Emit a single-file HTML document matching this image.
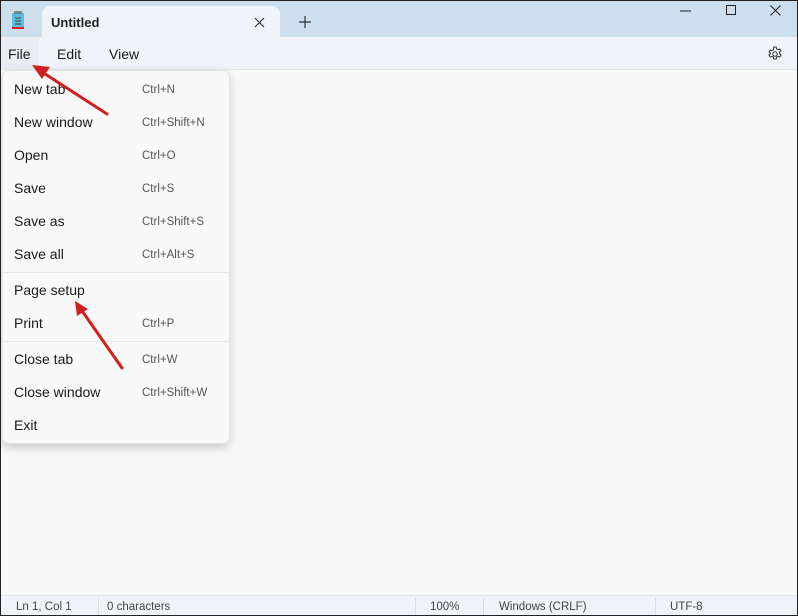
<!DOCTYPE html>
<html><head><meta charset="utf-8"><style>
*{margin:0;padding:0;box-sizing:border-box}
body{width:798px;height:616px;overflow:hidden;font-family:"Segoe UI","Liberation Sans",sans-serif;background:#222;position:relative}
.win{position:absolute;left:1px;top:1px;width:796px;height:614px;background:#f9f9f9;overflow:hidden}
.title{position:absolute;left:0;top:0;width:796px;height:37px;background:#cddeec}
.tab{position:absolute;left:41px;top:5px;width:238px;height:34px;background:#f0f4f9;border-radius:8px 8px 0 0}
.tab span{position:absolute;left:9px;top:9px;font-size:13px;font-weight:bold;color:#222}
.menubar{position:absolute;left:0;top:36px;width:796px;height:33px;background:#f0f4f9;border-bottom:1px solid #e3e6ea}
.mb{position:absolute;top:9px;font-size:14px;color:#1a1a1a}
.menu{position:absolute;left:1px;top:69px;width:228px;height:374px;background:#f9f9f9;border-radius:7px;box-shadow:0 4px 10px rgba(0,0,0,.18);border:1px solid #e4e4e4}
.it{position:absolute;left:11px;font-size:14px;color:#1a1a1a}
.sc{position:absolute;left:139px;font-size:11.5px;color:#555}
.sep{position:absolute;left:0;width:226px;height:1px;background:#e5e5e5}
.status{position:absolute;left:0;top:594px;width:796px;height:20px;background:#f0f4f9;border-top:1px solid #e3e6ea;font-size:11.5px;color:#444}
.status span{position:absolute;top:5px}
.vl{position:absolute;top:2px;width:1px;height:18px;background:#ddd}
</style></head><body><div class="win">
<div class="title">
 <svg style="position:absolute;left:10px;top:10px" width="14" height="19"><rect x="1" y="2" width="12" height="14" fill="#5bbde0"/><rect x="1" y="16" width="12" height="2" fill="#d8232a"/><rect x="3" y="0" width="8" height="3" fill="#555" opacity=".6"/><path d="M4 7h6M4 10h6M4 13h6" stroke="#555" stroke-width="1.2"/></svg>
 <div class="tab"><span>Untitled</span>
 <svg style="position:absolute;left:212px;top:11px" width="11" height="11"><path d="M1 1L10 10M10 1L1 10" stroke="#333" stroke-width="1.2"/></svg></div>
 <svg style="position:absolute;left:298px;top:15px" width="12" height="12"><path d="M6 0V12M0 6H12" stroke="#333" stroke-width="1.2"/></svg>
 <svg style="position:absolute;left:679px;top:9px" width="11" height="2"><path d="M0 1H11" stroke="#222" stroke-width="1"/></svg>
 <svg style="position:absolute;left:724px;top:3px" width="12" height="12"><rect x="1.5" y="1.5" width="9" height="9" fill="none" stroke="#222"/></svg>
 <svg style="position:absolute;left:769px;top:4px" width="11" height="11"><path d="M0.5 0.5L10.5 10.5M10.5 0.5L0.5 10.5" stroke="#222"/></svg>
</div>
<div class="menubar">
 <div style="position:absolute;left:0;top:0;width:38px;height:33px;background:#e9edf2"></div>
 <span class="mb" style="left:7px">File</span><span class="mb" style="left:56px">Edit</span><span class="mb" style="left:108px">View</span>
 <svg style="position:absolute;left:766px;top:9px" width="16" height="16" viewBox="0 0 16 16"><path d="M6.8 1h2.4l.4 1.9 1.4.8 1.8-.7 1.2 2-1.5 1.3v1.4l1.5 1.3-1.2 2-1.8-.7-1.4.8-.4 1.9H6.8l-.4-1.9-1.4-.8-1.8.7-1.2-2 1.5-1.3V7.3L2 6l1.2-2 1.8.7 1.4-.8z" fill="none" stroke="#333" stroke-width="1"/><circle cx="8" cy="8" r="2.2" fill="none" stroke="#333"/></svg>
</div>
<div class="menu">
 <span class="it" style="top:10px">New tab</span><span class="sc" style="top:13px">Ctrl+N</span>
 <span class="it" style="top:43px">New window</span><span class="sc" style="top:46px">Ctrl+Shift+N</span>
 <span class="it" style="top:76px">Open</span><span class="sc" style="top:79px">Ctrl+O</span>
 <span class="it" style="top:109px">Save</span><span class="sc" style="top:112px">Ctrl+S</span>
 <span class="it" style="top:142px">Save as</span><span class="sc" style="top:145px">Ctrl+Shift+S</span>
 <span class="it" style="top:175px">Save all</span><span class="sc" style="top:178px">Ctrl+Alt+S</span>
 <div class="sep" style="top:201px"></div>
 <span class="it" style="top:211px">Page setup</span>
 <span class="it" style="top:244px">Print</span><span class="sc" style="top:247px">Ctrl+P</span>
 <div class="sep" style="top:270px"></div>
 <span class="it" style="top:280px">Close tab</span><span class="sc" style="top:283px">Ctrl+W</span>
 <span class="it" style="top:313px">Close window</span><span class="sc" style="top:316px">Ctrl+Shift+W</span>
 <span class="it" style="top:346px">Exit</span>
</div>
<div class="status">
 <span style="left:15px">Ln 1, Col 1</span><div class="vl" style="left:97px"></div>
 <span style="left:106px">0 characters</span><div class="vl" style="left:414px"></div>
 <span style="left:429px">100%</span><div class="vl" style="left:482px"></div>
 <span style="left:498px">Windows (CRLF)</span><div class="vl" style="left:654px"></div>
 <span style="left:669px">UTF-8</span>
</div>
</div>
<svg style="position:absolute;left:0;top:0" width="798" height="616">
 <g stroke="#d01f1f" stroke-width="3" stroke-linecap="round" fill="#d01f1f">
 <path d="M107 114L42 72"/><path d="M122 368L80 308"/></g>
 <polygon points="32,65 50,67 42,79" fill="#d01f1f"/>
 <polygon points="75,301 88,309 77,316" fill="#d01f1f"/>
</svg>
</body></html>
